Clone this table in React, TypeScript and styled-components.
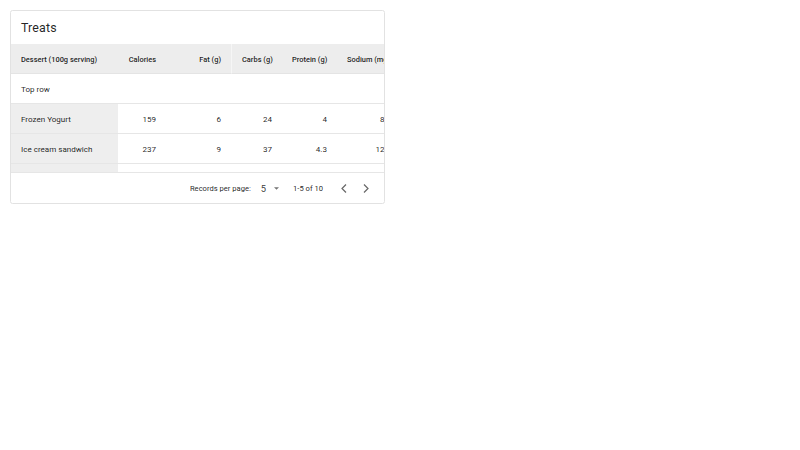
import React from "react";
import styled, { createGlobalStyle } from "styled-components";

const Global = createGlobalStyle`
  html, body { margin: 0; padding: 0; background: #fff; }
  body { font-family: Roboto, "Noto Sans", Arial, sans-serif; color: rgba(0,0,0,0.87); }
`;

const Page = styled.div`
  padding: 10px;
`;

const Card = styled.div`
  width: 373px;
  border: 1px solid #e2e2e2;
  border-radius: 2.5px;
  background: #fff;
  overflow: hidden;
`;

const Top = styled.div`
  height: 33px;
  display: flex;
  align-items: center;
  padding: 0 10px;
`;

const Title = styled.div`
  font-size: 12.4px;
  font-weight: 400;
  letter-spacing: 0.0125em;
  color: rgba(0, 0, 0, 0.87);
`;

const Scroll = styled.div`
  height: 128px;
  overflow: hidden;
`;

const Table = styled.table`
  border-collapse: separate;
  border-spacing: 0;
  table-layout: fixed;
  width: 513px;
`;

const Th = styled.th<{ $left?: boolean; $split?: boolean }>`
  box-sizing: border-box;
  height: 30px;
  padding: 1px 10px 0;
  background: #ededed;
  border-bottom: 1px solid #e4e4e4;
  border-left: ${(p) => (p.$split ? "1px solid #f6f6f6" : "none")};
  font-size: 7.44px;
  font-weight: 500;
  text-align: ${(p) => (p.$left ? "left" : "right")};
  white-space: nowrap;
  overflow: hidden;
  color: rgba(0, 0, 0, 0.87);
`;

const Td = styled.td<{ $left?: boolean; $sticky?: boolean }>`
  box-sizing: border-box;
  height: 30px;
  padding: 2px 10px 0;
  background: ${(p) => (p.$sticky ? "#eeeeee" : "#fff")};
  border-bottom: 1px solid #e6e6e6;
  font-size: 8.06px;
  text-align: ${(p) => (p.$left ? "left" : "right")};
  white-space: nowrap;
  overflow: hidden;
  color: rgba(0, 0, 0, 0.87);
`;

const Bottom = styled.div`
  height: 30px;
  border-top: 1px solid #e6e6e6;
  display: flex;
  align-items: center;
  justify-content: flex-end;
  padding: 0 9px 0 10px;
  font-size: 7.6px;
  color: rgba(0, 0, 0, 0.87);
`;

const Label = styled.span`
  margin-right: 10px;
`;

const Select = styled.div`
  display: flex;
  align-items: center;
  margin-right: 14px;
  font-size: 9.4px;
  color: rgba(0, 0, 0, 0.8);
  svg { margin-left: 8px; }
`;

const Range = styled.span`
  margin-right: 10px;
`;

const IconBtn = styled.button`
  width: 19px;
  height: 19px;
  padding: 0;
  margin-left: 2px;
  border: none;
  background: transparent;
  display: flex;
  align-items: center;
  justify-content: center;
  color: rgba(0, 0, 0, 0.6);
`;

const cols = [107, 48, 65, 51, 55, 62, 65, 60];
const headers = [
  "Dessert (100g serving)",
  "Calories",
  "Fat (g)",
  "Carbs (g)",
  "Protein (g)",
  "Sodium (mg)",
  "Calcium (%)",
  "Iron (%)",
];
const rows = [
  ["Frozen Yogurt", "159", "6", "24", "4", "87", "14%", "1%"],
  ["Ice cream sandwich", "237", "9", "37", "4.3", "129", "8%", "1%"],
  ["Eclair", "262", "16", "23", "6", "337", "6%", "7%"],
  ["Cupcake", "305", "3.7", "67", "4.3", "413", "3%", "8%"],
  ["Gingerbread", "356", "16", "49", "3.9", "327", "7%", "16%"],
];

const Chevron = ({ dir }: { dir: "left" | "right" }) => (
  <svg width="15" height="15" viewBox="0 0 15 15" fill="none" stroke="currentColor" strokeWidth="1.2">
    {dir === "left" ? <polyline points="9,3.5 5,7.5 9,11.5" /> : <polyline points="6,3.5 10,7.5 6,11.5" />}
  </svg>
);

export default function App() {
  return (
    <Page>
      <Global />
      <Card>
        <Top>
          <Title>Treats</Title>
        </Top>
        <Scroll>
          <Table>
            <colgroup>
              {cols.map((w, i) => (
                <col key={i} style={{ width: w }} />
              ))}
            </colgroup>
            <thead>
              <tr>
                {headers.map((h, i) => (
                  <Th key={h} $left={i === 0} $split={i === 3}>
                    {h}
                  </Th>
                ))}
              </tr>
            </thead>
            <tbody>
              <tr>
                <Td $left colSpan={8}>
                  Top row
                </Td>
              </tr>
              {rows.map((r) => (
                <tr key={r[0]}>
                  {r.map((c, i) => (
                    <Td key={i} $left={i === 0} $sticky={i === 0}>
                      {c}
                    </Td>
                  ))}
                </tr>
              ))}
            </tbody>
          </Table>
        </Scroll>
        <Bottom>
          <Label>Records per page:</Label>
          <Select>
            <span>5</span>
            <svg width="5" height="3" viewBox="0 0 10 5" fill="rgba(0,0,0,0.54)">
              <path d="M0 0l5 5 5-5z" />
            </svg>
          </Select>
          <Range>1-5 of 10</Range>
          <IconBtn>
            <Chevron dir="left" />
          </IconBtn>
          <IconBtn>
            <Chevron dir="right" />
          </IconBtn>
        </Bottom>
      </Card>
    </Page>
  );
}
